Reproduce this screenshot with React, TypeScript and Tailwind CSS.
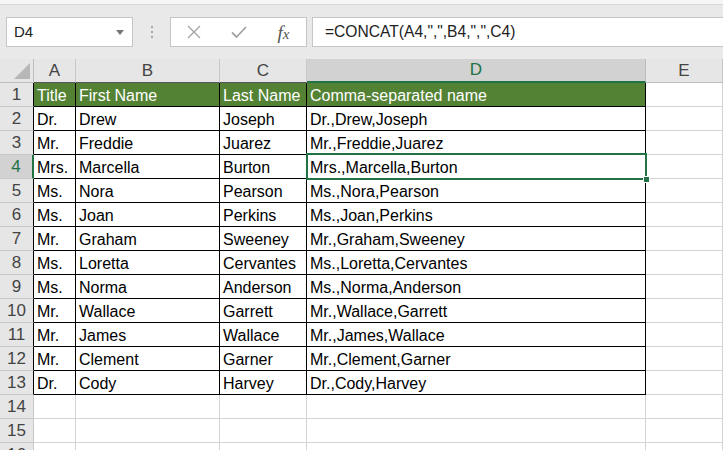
import React from "react";

const rows: [string, string, string][] = [
  ["Dr.", "Drew", "Joseph"],
  ["Mr.", "Freddie", "Juarez"],
  ["Mrs.", "Marcella", "Burton"],
  ["Ms.", "Nora", "Pearson"],
  ["Ms.", "Joan", "Perkins"],
  ["Mr.", "Graham", "Sweeney"],
  ["Ms.", "Loretta", "Cervantes"],
  ["Ms.", "Norma", "Anderson"],
  ["Mr.", "Wallace", "Garrett"],
  ["Mr.", "James", "Wallace"],
  ["Mr.", "Clement", "Garner"],
  ["Dr.", "Cody", "Harvey"],
];

const font = { fontFamily: '"Liberation Sans", Arial, sans-serif' };

const FormulaBar = () => (
  <div className="h-[59px] bg-[#e9e9e9] flex flex-col">
    <div className="h-[5px] bg-[#f6f6f6] border-b border-[#d8d8d8]" />
    <div className="flex items-start pt-[12px] pl-[6px]">
      <div className="w-[127px] h-[30px] bg-white border border-[#c6c6c6] flex items-center justify-between pl-[7px] pr-[8px]">
        <span className="text-[15px] text-[#222]">D4</span>
        <svg width="8" height="5" viewBox="0 0 8 5">
          <path d="M0 0 L8 0 L4 5 Z" fill="#777" />
        </svg>
      </div>
      <div className="w-[37px] h-[30px] flex flex-col items-center justify-center gap-[3px]">
        <span className="w-[2px] h-[2px] bg-[#a6a6a6]" />
        <span className="w-[2px] h-[2px] bg-[#a6a6a6]" />
        <span className="w-[2px] h-[2px] bg-[#a6a6a6]" />
      </div>
      <div className="w-[137px] h-[30px] bg-white border border-[#c6c6c6] flex items-center">
        <div className="w-[46px] flex justify-center">
          <svg width="14" height="14" viewBox="0 0 14 14">
            <path d="M1 1 L13 13 M13 1 L1 13" stroke="#a3a3a3" strokeWidth="1.3" />
          </svg>
        </div>
        <div className="w-[44px] flex justify-center">
          <svg width="16" height="14" viewBox="0 0 16 14">
            <path d="M1 7.5 L5.5 12 L15 2" stroke="#a3a3a3" strokeWidth="1.8" fill="none" />
          </svg>
        </div>
        <div className="flex-1 flex justify-center">
          <span
            className="text-[19px] italic text-[#555] leading-none"
            style={{ fontFamily: '"Liberation Serif", "Times New Roman", serif' }}
          >
            f<span className="text-[15px]">x</span>
          </span>
        </div>
      </div>
      <div className="ml-[5px] flex-1 h-[30px] bg-white border border-[#c6c6c6] border-r-0 flex items-center pl-[12px]">
        <span className="text-[15.6px] text-[#222]">=CONCAT(A4,",",B4,",",C4)</span>
      </div>
    </div>
  </div>
);

const colHeaders = ["A", "B", "C", "D", "E"];

export default function App() {
  const gridRows = Array.from({ length: 16 }, (_, i) => i + 1);

  return (
    <div className="w-[723px] h-[450px] overflow-hidden bg-white" style={font}>
      <FormulaBar />
      <div className="grid grid-cols-[34px_42px_144px_87px_339px_1fr] auto-rows-[24px]">
        {/* corner */}
        <div className="bg-[#e6e6e6] border-r border-b border-[#bdbdbd] flex items-end justify-end pr-[3px] pb-[3px]">
          <svg width="16" height="16" viewBox="0 0 16 16">
            <path d="M16 0 L16 16 L0 16 Z" fill="#b7b7b7" />
          </svg>
        </div>
        {colHeaders.map((c) =>
          c === "D" ? (
            <div
              key={c}
              className="bg-[#d2d2d2] border-r border-[#bdbdbd] border-b-2 border-b-[#217346] flex items-center justify-center text-[17px] text-[#217346]"
            >
              {c}
            </div>
          ) : (
            <div
              key={c}
              className={`bg-[#e6e6e6] border-r border-[#c8c8c8] border-b ${
                c === "E" ? "border-b-[#bdbdbd]" : "border-b-[#555]"
              } flex items-center justify-center text-[17px] text-[#444]`}
            >
              {c}
            </div>
          )
        )}

        {gridRows.map((r) => {
          const inTable = r <= 13;
          const selected = r === 4;
          const data: string[] =
            r === 1
              ? ["Title", "First Name", "Last Name", "Comma-separated name"]
              : inTable
              ? [...rows[r - 2], rows[r - 2].join(",")]
              : ["", "", "", ""];
          return (
            <React.Fragment key={r}>
              <div
                className={`border-b border-b-[#c8c8c8] flex items-center justify-center text-[17px] ${
                  selected
                    ? "bg-[#d2d2d2] text-[#217346] border-r-2 border-r-[#217346]"
                    : inTable
                    ? "bg-[#e6e6e6] text-[#444] border-r border-r-black"
                    : "bg-[#e6e6e6] text-[#444] border-r border-r-[#c8c8c8]"
                }`}
              >
                {r}
              </div>
              {data.map((v, ci) => (
                <div
                  key={ci}
                  className={`relative border-r border-b flex items-end pl-[3px] text-[16px] leading-[20px] whitespace-nowrap ${
                    inTable ? "border-black" : "border-[#d4d4d4]"
                  } ${r === 1 ? "bg-[#548235] text-white" : "text-black"} ${
                    selected && ci === 3 ? "z-10" : ""
                  }`}
                >
                  {v}
                  {selected && ci === 3 && (
                    <>
                      <div className="absolute -left-[1px] -top-[2px] -right-[2px] -bottom-[2px] border-2 border-[#217346]" />
                      <div className="absolute -right-[5px] -bottom-[5px] w-[7px] h-[7px] bg-[#217346] border border-white" />
                    </>
                  )}
                </div>
              ))}
              <div className="border-r border-b border-[#d4d4d4]" />
            </React.Fragment>
          );
        })}
      </div>
    </div>
  );
}
